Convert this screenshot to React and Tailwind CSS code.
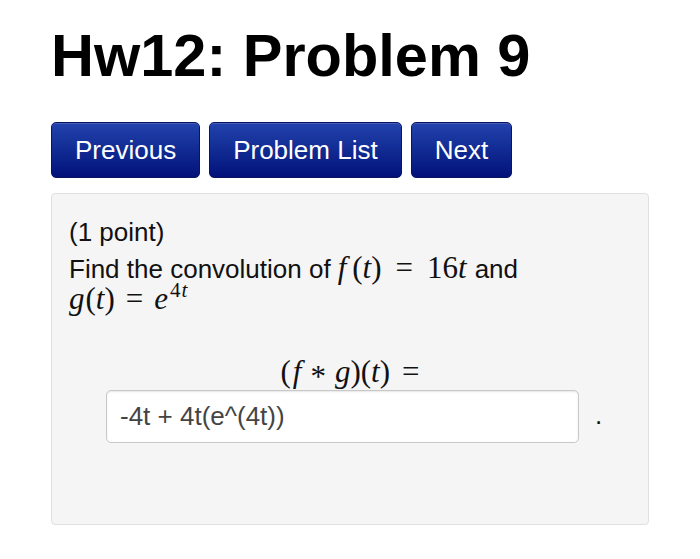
const NavButton = ({ children }) => (
  <button className="h-[56px] px-[23px] rounded-[5px] border border-[#0a1460] bg-gradient-to-b from-[#2342ad] to-[#04107a] text-white text-[26px] leading-none shadow-[inset_0_1px_0_rgba(255,255,255,0.15)]">
    {children}
  </button>
);

const M = ({ children, className = '' }) => (
  <span className={`font-['Liberation_Serif',serif] text-[31px] ${className}`}>{children}</span>
);

const App = () => {
  return (
    <div className="w-[700px] h-[559px] bg-white px-[51px] pt-[26px] font-['Liberation_Sans',Arial,sans-serif] text-[#111]">
      <h1 className="text-[59.5px] leading-[60px] font-bold text-black">Hw12: Problem 9</h1>

      {/* Navigation */}
      <div className="mt-[36px] flex gap-[9px]">
        <NavButton>Previous</NavButton>
        <NavButton>Problem List</NavButton>
        <NavButton>Next</NavButton>
      </div>

      {/* Problem body */}
      <div className="mt-[15px] w-[598px] h-[332px] rounded-[4px] border border-[#e0e0e0] bg-[#f5f5f5] px-[17px] pt-[19px] text-[26px]">
        <div className="leading-[38px]">(1 point)</div>
        <div className="mt-[2px] leading-[30px]">
          <div className="whitespace-nowrap">
            Find the convolution of
            <M className="ml-[7px] italic">f</M>
            <M className="ml-[6px]">(</M>
            <M className="italic">t</M>
            <M>)</M>
            <M className="mx-[14px]">=</M>
            <M>16</M>
            <M className="italic">t</M>
            <span className="ml-[8px]">and</span>
          </div>
          <div className="whitespace-nowrap">
            <M className="italic">g</M>
            <M className="ml-[1px]">(</M>
            <M className="italic">t</M>
            <M>)</M>
            <M className="mx-[11px]">=</M>
            <M className="italic">e</M>
            <span className="font-['Liberation_Serif',serif] text-[21px] relative top-[-12px] ml-[2px]">
              4<i className="ml-[1px]">t</i>
            </span>
          </div>
        </div>

        <div className="mt-[40px] h-[30px] leading-[30px] text-center whitespace-nowrap">
          <M>(</M>
          <M className="italic ml-[2px]">f</M>
          <M className="mx-[9px] relative top-[5px]">*</M>
          <M className="italic">g</M>
          <M>)(</M>
          <M className="italic">t</M>
          <M>)</M>
          <M className="ml-[12px]">=</M>
        </div>

        <div className="mt-[3px] ml-[37px] flex items-center">
          <input
            readOnly
            value="-4t + 4t(e^(4t))"
            className="w-[473px] h-[53px] rounded-[5px] border border-[#c8c8c8] bg-white pl-[13px] text-[26px] text-[#444] shadow-[inset_0_1px_2px_rgba(0,0,0,0.1)] outline-none"
          />
          <span className="ml-[16px] -mt-[2px] text-[26px]">.</span>
        </div>
      </div>
    </div>
  );
};

export default App;
